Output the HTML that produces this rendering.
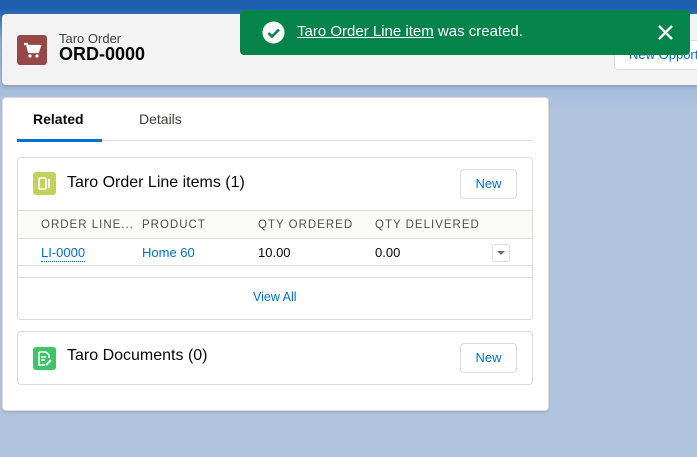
<!DOCTYPE html>
<html><head><style>
*{box-sizing:border-box;margin:0;padding:0}
body{width:697px;height:457px;overflow:hidden;font-family:"Liberation Sans",sans-serif;background:linear-gradient(#1d5fae 0,#1d5fae 8px,#8eaad6 40px,#b0c4df 110px,#b0c4df 100%);position:relative}
.abs{position:absolute}
.hdr{left:2px;top:14px;width:700px;height:71px;background:#f3f3f3;border-radius:4px;box-shadow:0 2px 3px rgba(0,0,0,.15)}
.card{background:#fff;border:1px solid #dddbda;border-radius:4px}
.btn{background:#fff;border:1px solid #dddbda;border-radius:4px;color:#0070d2;font-size:13px;text-align:center;line-height:27px}
.th{font-size:11.5px;letter-spacing:1px;color:#514f4d;top:219px}
.td{font-size:13px;top:245px}
</style></head><body>
<div class="abs hdr"></div>
<div class="abs" style="left:17px;top:35px;width:30px;height:30px;background:#964847;border-radius:3px">
<svg width="30" height="30" viewBox="0 0 30 30"><path d="M7 9h3l2 8h9l2-6H11" fill="none" stroke="#fff" stroke-width="2.2"/><rect x="11" y="11" width="11" height="5" fill="#fff"/><circle cx="13" cy="21" r="1.6" fill="#fff"/><circle cx="20" cy="21" r="1.6" fill="#fff"/></svg></div>
<div class="abs" style="left:59px;top:31px;font-size:13px;color:#3e3e3c">Taro Order</div>
<div class="abs" style="left:59px;top:44px;font-size:18px;font-weight:bold;color:#080707">ORD-0000</div>
<div class="abs btn" style="left:614px;top:40px;width:90px;height:30px;text-align:left;padding-left:14px">New Opport</div>
<div class="abs" style="left:240px;top:10px;width:450px;height:45px;background:#04844b;border-radius:4px"></div>
<svg class="abs" style="left:262px;top:21px" width="23" height="23"><circle cx="11.5" cy="11.5" r="11" fill="#fff"/><path d="M6.5 12l3.5 3.5 7-7" fill="none" stroke="#04844b" stroke-width="2.6"/></svg>
<div class="abs" style="left:297px;top:23px;font-size:15px;color:#fff"><u>Taro Order Line item</u> was created.</div>
<svg class="abs" style="left:657px;top:24px" width="17" height="17"><path d="M2 2l13 13M15 2L2 15" stroke="#fff" stroke-width="2.4"/></svg>
<div class="abs card" style="left:2px;top:97px;width:547px;height:314px;box-shadow:0 2px 2px rgba(0,0,0,.1)"></div>
<div class="abs" style="left:33px;top:111px;font-size:14px;font-weight:bold;color:#080707">Related</div>
<div class="abs" style="left:139px;top:111px;font-size:14px;color:#3e3e3c">Details</div>
<div class="abs" style="left:17px;top:140px;width:516px;height:1px;background:#dddbda"></div>
<div class="abs" style="left:17px;top:139px;width:85px;height:3px;background:#0070d2"></div>
<div class="abs card" style="left:17px;top:157px;width:516px;height:163px"></div>
<div class="abs" style="left:33px;top:172px;width:23px;height:23px;background:#c1d35a;border-radius:3px"><svg width="23" height="23"><rect x="6" y="6" width="7" height="11" rx="1" fill="none" stroke="#fff" stroke-width="1.6"/><rect x="15" y="7" width="2" height="9" fill="#fff"/></svg></div>
<div class="abs" style="left:67px;top:174px;font-size:16px;color:#080707">Taro Order Line items (1)</div>
<div class="abs btn" style="left:460px;top:169px;width:57px;height:30px">New</div>
<div class="abs" style="left:18px;top:210px;width:514px;height:29px;background:#fafaf9;border-top:1px solid #dddbda;border-bottom:1px solid #dddbda"></div>
<div class="abs th" style="left:41px">ORDER LINE...</div>
<div class="abs th" style="left:142px">PRODUCT</div>
<div class="abs th" style="left:258px">QTY ORDERED</div>
<div class="abs th" style="left:375px">QTY DELIVERED</div>
<div class="abs td" style="left:41px;color:#0070d2;border-bottom:1px dotted #0070d2;padding-bottom:1px">LI-0000</div>
<div class="abs td" style="left:142px;color:#0070d2">Home 60</div>
<div class="abs td" style="left:258px;color:#080707">10.00</div>
<div class="abs td" style="left:375px;color:#080707">0.00</div>
<div class="abs" style="left:492px;top:244px;width:18px;height:18px;border:1px solid #dddbda;border-radius:3px;background:#fff"><svg width="16" height="16"><path d="M4 6h8l-4 4z" fill="#706e6b"/></svg></div>
<div class="abs" style="left:18px;top:265px;width:514px;height:1px;background:#dddbda"></div>
<div class="abs" style="left:18px;top:277px;width:514px;height:1px;background:#dddbda"></div>
<div class="abs" style="left:253px;top:290px;font-size:12.5px;color:#0070d2">View All</div>
<div class="abs card" style="left:17px;top:331px;width:516px;height:54px"></div>
<div class="abs" style="left:33px;top:347px;width:23px;height:23px;background:#3fc468;border-radius:3px"><svg width="23" height="23"><path d="M6 5h7l3 3v3M6 5v13h6" fill="none" stroke="#fff" stroke-width="1.6"/><path d="M8 10h5M8 13h4" stroke="#fff" stroke-width="1.4"/><path d="M13 18l5-5" stroke="#fff" stroke-width="2"/></svg></div>
<div class="abs" style="left:67px;top:347px;font-size:16px;color:#080707">Taro Documents (0)</div>
<div class="abs btn" style="left:460px;top:343px;width:57px;height:30px">New</div>
</body></html>
